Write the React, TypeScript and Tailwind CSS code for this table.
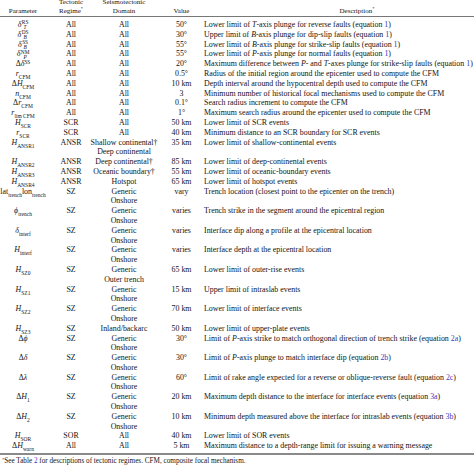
import type { ReactNode } from "react";

type Row = {
  p: ReactNode;
  reg: string;
  dom: string[];
  val: string;
  desc: ReactNode;
};

// small helpers for the math-ish parameter names
const I = ({ children }: { children: ReactNode }) => <span className="italic">{children}</span>;

const Sub = ({ children }: { children: ReactNode }) => (
  <span className="align-sub text-[5.5px] leading-[0]">{children}</span>
);

const SupSub = ({ sup, sub }: { sup: string; sub: string }) => (
  <span className="inline-flex flex-col align-middle text-[5.3px] leading-[5px] ml-[0.5px]">
    <span>{sup}</span>
    <span className="italic">{sub}</span>
  </span>
);

const Eq = ({ n }: { n: string }) => (
  <>
    (equation <span className="text-[#3b3bc4]">{n}</span>)
  </>
);

const rows: Row[] = [
  { p: <><I>δ</I><SupSub sup="RS" sub="T" /></>, reg: "All", dom: ["All"], val: "50°", desc: <>Lower limit of <I>T</I>-axis plunge for reverse faults <Eq n="1" /></> },
  { p: <><I>δ</I><SupSub sup="DS" sub="B" /></>, reg: "All", dom: ["All"], val: "30°", desc: <>Upper limit of <I>B</I>-axis plunge for dip-slip faults <Eq n="1" /></> },
  { p: <><I>δ</I><SupSub sup="SS" sub="B" /></>, reg: "All", dom: ["All"], val: "55°", desc: <>Lower limit of <I>B</I>-axis plunge for strike-slip faults <Eq n="1" /></> },
  { p: <><I>δ</I><SupSub sup="NM" sub="P" /></>, reg: "All", dom: ["All"], val: "55°", desc: <>Lower limit of <I>P</I>-axis plunge for normal faults <Eq n="1" /></> },
  { p: <>Δ<I>δ</I><sup className="text-[5.3px]">SS</sup></>, reg: "All", dom: ["All"], val: "20°", desc: <>Maximum difference between <I>P</I>- and <I>T</I>-axes plunge for strike-slip faults <Eq n="1" /></> },
  { p: <><I>r</I><Sub>CFM</Sub></>, reg: "All", dom: ["All"], val: "0.5°", desc: "Radius of the initial region around the epicenter used to compute the CFM" },
  { p: <>Δ<I>H</I><Sub>CFM</Sub></>, reg: "All", dom: ["All"], val: "10 km", desc: "Depth interval around the hypocentral depth used to compute the CFM" },
  { p: <><I>n</I><Sub>CFM</Sub></>, reg: "All", dom: ["All"], val: "3", desc: "Minimum number of historical focal mechanisms used to compute the CFM" },
  { p: <>Δ<I>r</I><Sub>CFM</Sub></>, reg: "All", dom: ["All"], val: "0.1°", desc: "Search radius increment to compute the CFM" },
  { p: <><I>r</I><Sub>lim CFM</Sub></>, reg: "All", dom: ["All"], val: "1°", desc: "Maximum search radius around the epicenter used to compute the CFM" },
  { p: <><I>H</I><Sub>SCR</Sub></>, reg: "SCR", dom: ["All"], val: "50 km", desc: "Lower limit of SCR events" },
  { p: <><I>r</I><Sub>SCR</Sub></>, reg: "SCR", dom: ["All"], val: "40 km", desc: "Minimum distance to an SCR boundary for SCR events" },
  { p: <><I>H</I><Sub>ANSR1</Sub></>, reg: "ANSR", dom: ["Shallow continental†", "Deep continental"], val: "35 km", desc: "Lower limit of shallow-continental events" },
  { p: <><I>H</I><Sub>ANSR2</Sub></>, reg: "ANSR", dom: ["Deep continental†"], val: "85 km", desc: "Lower limit of deep-continental events" },
  { p: <><I>H</I><Sub>ANSR3</Sub></>, reg: "ANSR", dom: ["Oceanic boundary†"], val: "55 km", desc: "Lower limit of oceanic-boundary events" },
  { p: <><I>H</I><Sub>ANSR4</Sub></>, reg: "ANSR", dom: ["Hotspot"], val: "65 km", desc: "Lower limit of hotspot events" },
  { p: <>lat<Sub>trench</Sub>lon<Sub>trench</Sub></>, reg: "SZ", dom: ["Generic", "Onshore"], val: "vary", desc: "Trench location (closest point to the epicenter on the trench)" },
  { p: <><I>ϕ</I><Sub>trench</Sub></>, reg: "SZ", dom: ["Generic", "Onshore"], val: "varies", desc: "Trench strike in the segment around the epicentral region" },
  { p: <><I>δ</I><Sub>interf</Sub></>, reg: "SZ", dom: ["Generic", "Onshore"], val: "varies", desc: "Interface dip along a profile at the epicentral location" },
  { p: <><I>H</I><Sub>interf</Sub></>, reg: "SZ", dom: ["Generic", "Onshore"], val: "varies", desc: "Interface depth at the epicentral location" },
  { p: <><I>H</I><Sub>SZ0</Sub></>, reg: "SZ", dom: ["Generic", "Outer trench"], val: "65 km", desc: "Lower limit of outer-rise events" },
  { p: <><I>H</I><Sub>SZ1</Sub></>, reg: "SZ", dom: ["Generic", "Onshore"], val: "15 km", desc: "Upper limit of intraslab events" },
  { p: <><I>H</I><Sub>SZ2</Sub></>, reg: "SZ", dom: ["Generic", "Onshore"], val: "70 km", desc: "Lower limit of interface events" },
  { p: <><I>H</I><Sub>SZ3</Sub></>, reg: "SZ", dom: ["Inland/backarc"], val: "50 km", desc: "Lower limit of upper-plate events" },
  { p: <>Δ<I>ϕ</I></>, reg: "SZ", dom: ["Generic", "Onshore"], val: "30°", desc: <>Limit of <I>P</I>-axis strike to match orthogonal direction of trench strike <Eq n="2a" /></> },
  { p: <>Δ<I>δ</I></>, reg: "SZ", dom: ["Generic", "Onshore"], val: "30°", desc: <>Limit of <I>P</I>-axis plunge to match interface dip <Eq n="2b" /></> },
  { p: <>Δ<I>λ</I></>, reg: "SZ", dom: ["Generic", "Onshore"], val: "60°", desc: <>Limit of rake angle expected for a reverse or oblique-reverse fault <Eq n="2c" /></> },
  { p: <>Δ<I>H</I><Sub>1</Sub></>, reg: "SZ", dom: ["Generic", "Onshore"], val: "20 km", desc: <>Maximum depth distance to the interface for interface events <Eq n="3a" /></> },
  { p: <>Δ<I>H</I><Sub>2</Sub></>, reg: "SZ", dom: ["Generic", "Onshore"], val: "10 km", desc: <>Minimum depth measured above the interface for intraslab events <Eq n="3b" /></> },
  { p: <><I>H</I><Sub>SOR</Sub></>, reg: "SOR", dom: ["All"], val: "40 km", desc: "Lower limit of SOR events" },
  { p: <>Δ<I>H</I><Sub>warn</Sub></>, reg: "All", dom: ["All"], val: "5 km", desc: "Maximum distance to a depth-range limit for issuing a warning message" },
];

const cols = "grid grid-cols-[46px_50px_56px_51px_1fr]";

export default function App() {
  return (
    <div className="w-[474px] h-[470px] overflow-hidden bg-white text-[#141414] font-['Liberation_Serif',serif] text-[7.9px]">
      {/* header, top line sits right at the crop edge */}
      <div className={`${cols} -mt-[2px] leading-[8.5px] text-[7px]`}>
        <div className="self-end text-center">Parameter</div>
        <div className="text-center">
          Tectonic
          <br />
          Regime<sup className="text-[4.5px]">*</sup>
        </div>
        <div className="text-center">
          Seismotectonic
          <br />
          Domain
        </div>
        <div className="self-end text-center pl-[8px]">Value</div>
        <div className="self-end text-center w-[308px]">
          Description<sup className="text-[4.5px]">*</sup>
        </div>
      </div>
      <div className="mt-[1px] border-t border-[#777]" />

      <div className="mt-[3px] leading-[9.8px] whitespace-nowrap">
        {rows.map((r, i) => (
          <div key={i} className={cols}>
            <div className="h-[9.8px] text-center">{r.p}</div>
            <div className="h-[9.8px] text-center">{r.reg}</div>
            <div className="flex flex-col items-center">
              {r.dom.map((d) => (
                <span key={d} className="h-[9.8px]">{d}</span>
              ))}
            </div>
            <div className="h-[9.8px] text-center pl-[8px]">{r.val}</div>
            <div className="h-[9.8px] pl-[1px]">{r.desc}</div>
          </div>
        ))}
      </div>

      <div className="mt-[2px] border-t-[2px] border-[#8a8a8a]" />
      <div className="mt-[2px] pl-[2px] text-[7.2px] leading-[9px] whitespace-nowrap">
        <sup className="text-[4.5px]">*</sup>See Table <span className="text-[#3b3bc4]">2</span> for descriptions of
        tectonic regimes. CFM, composite focal mechanism.
      </div>
    </div>
  );
}
